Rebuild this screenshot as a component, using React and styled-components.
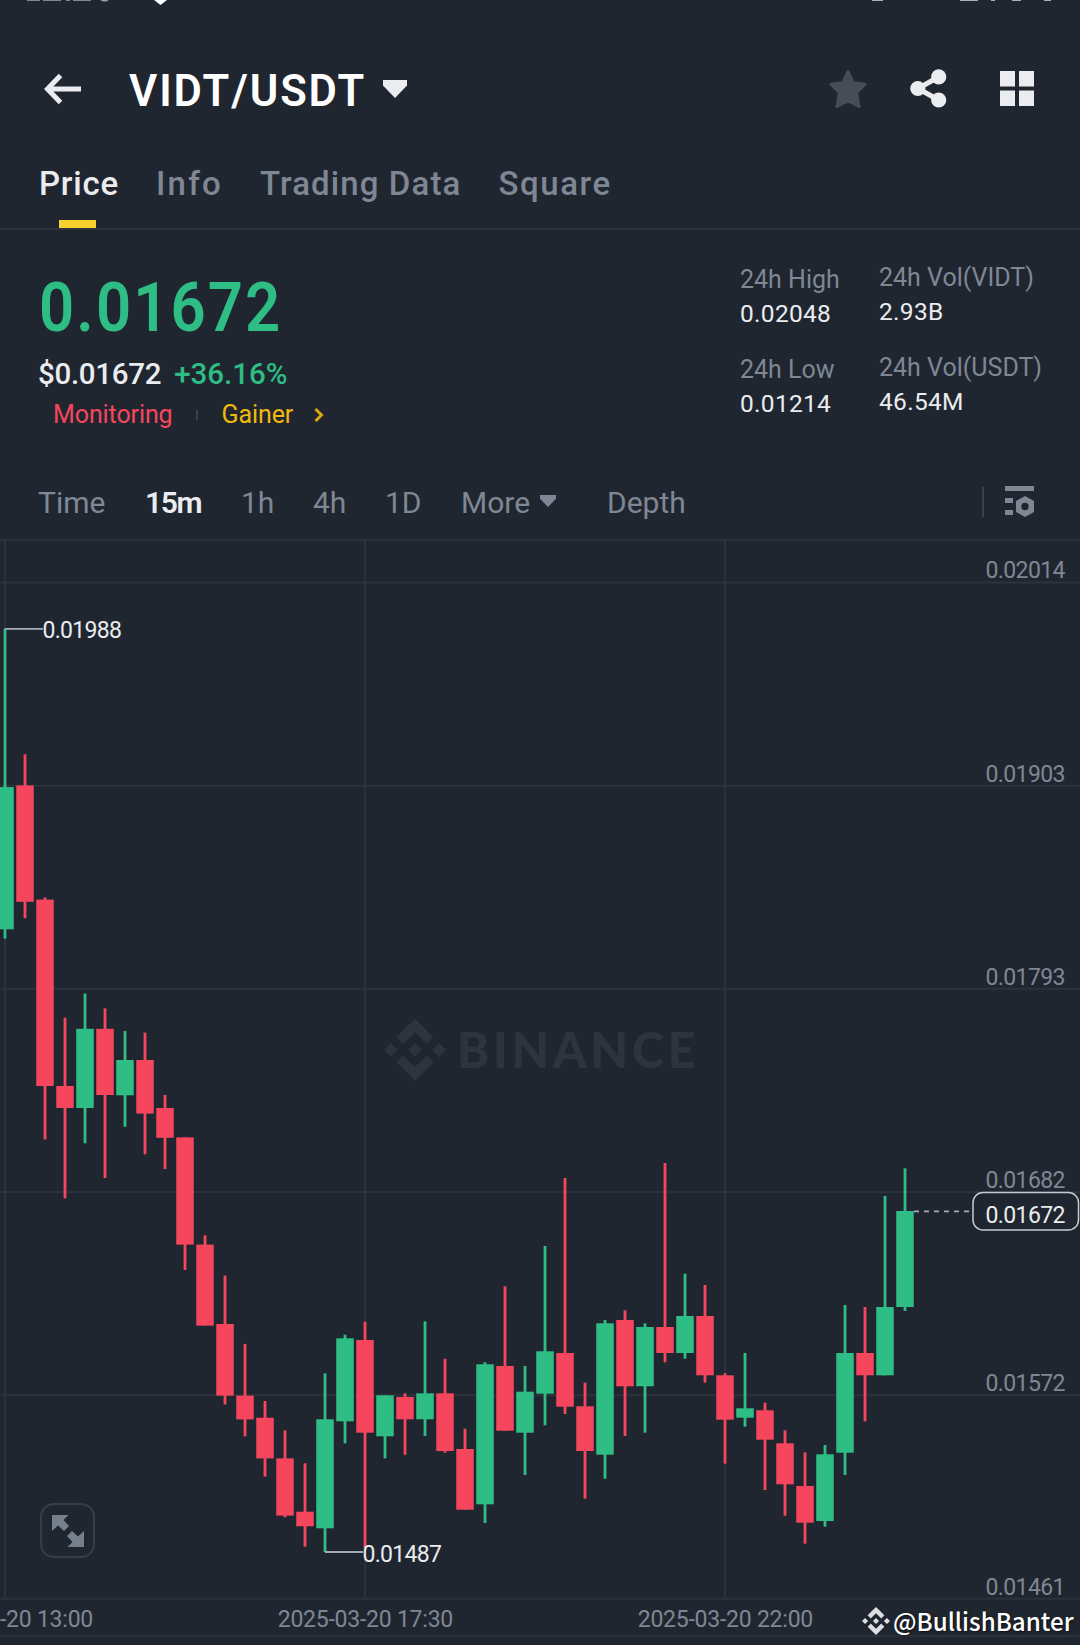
import React from 'react'
import styled, { createGlobalStyle } from 'styled-components'

const colors = {
  bg: '#202630',
  line: '#2c323c',
  text: '#eaecef',
  muted: '#7f8794',
  up: '#2ebd85',
  down: '#f6465d'
}

const GlobalStyle = createGlobalStyle`
  body {
    margin: 0;
    background: ${colors.bg};
    font-family: Roboto, "Liberation Sans", sans-serif;
    color: ${colors.text};
  }
`

const Screen = styled.main`
  display: flex;
  flex-direction: column;
  width: 1080px;
  height: 1645px;
  overflow: hidden;
  background: ${colors.bg};

  > * {
    flex: none;
  }
`

const StatusBar = styled.svg`
  display: block;
`

const Header = styled.header`
  display: flex;
  align-items: center;
  height: 138px;
  padding: 19px 46px 0 44px;
  box-sizing: border-box;
`

const Title = styled.h1`
  display: flex;
  align-items: center;
  gap: 17px;
  margin: 0 auto 0 47px;
  font-size: 43.5px;
  font-weight: 600;
  line-height: 52px;
  letter-spacing: 1.9px;
  color: #fff;
`

const Pair = styled.span`
  padding-top: 6px;
`

const Actions = styled.div`
  display: flex;
  align-items: center;
`

const ActionIcon = styled.svg`
  display: block;
  margin-left: ${p => p.$gap}px;
`

const Tabs = styled.nav`
  display: flex;
  gap: 37px;
  height: 82px;
  padding: 0 39px;
  border-bottom: 2px solid ${colors.line};
  box-sizing: border-box;
`

const Tab = styled.a`
  display: flex;
  flex-direction: column;
  align-items: center;
  justify-content: space-between;
  font-size: 33px;
  font-weight: 500;
  line-height: 72px;
  letter-spacing: ${p => p.$track}px;
  color: ${p => (p.$active ? colors.text : colors.muted)};
`

const Indicator = styled.span`
  width: 37px;
  height: 8px;
  margin-right: 4px;
  background: #f8d12f;
`

const Summary = styled.section`
  display: flex;
  justify-content: space-between;
  height: 223px;
  padding-left: 38px;
  box-sizing: border-box;
`

const PriceBlock = styled.div`
  display: flex;
  flex-direction: column;
  padding-top: 38px;
`

// narrower digits, set wider apart
const LastPrice = styled.div`
  margin-left: 1px;
  font-size: 68.5px;
  font-weight: 600;
  line-height: 80px;
  letter-spacing: 2.3px;
  color: ${colors.up};
  transform: scaleX(0.9);
  transform-origin: left;
`

const FiatRow = styled.div`
  display: flex;
  gap: 13px;
  margin-top: 8px;
  font-size: 29.5px;
  font-weight: 500;
  line-height: 36px;
  letter-spacing: -0.3px;
`

const Change = styled.span`
  letter-spacing: 0;
  color: ${colors.up};
`

const TagRow = styled.div`
  display: flex;
  align-items: center;
  padding-left: 15px;
  margin-top: 6px;
  font-size: 25px;
  line-height: 34px;
  letter-spacing: -0.1px;
`

const Tag = styled.span`
  color: ${p => p.$color};
`

const TagDivider = styled.i`
  width: 2px;
  height: 10px;
  margin: 0 24px 0 23px;
  background: #3a414c;
`

const Stats = styled.div`
  display: flex;
  width: 340px;
  padding-top: 33px;
`

const StatColumn = styled.dl`
  width: ${p => p.$width}px;
  margin: ${p => p.$top}px 0 0;
`

const StatLabel = styled.dt`
  font-size: 25px;
  line-height: 30px;
  white-space: nowrap;
  color: ${colors.muted};
`

const StatValue = styled.dd`
  margin: 4px 0 26px;
  font-size: 24.5px;
  line-height: 30px;
  letter-spacing: 0.3px;
`

const Toolbar = styled.div`
  display: flex;
  align-items: center;
  height: 86px;
  padding: 13px 45px 0 38px;
  box-sizing: border-box;
  font-size: 30px;
  color: ${colors.muted};
`

const Interval = styled.span`
  display: flex;
  align-items: center;
  gap: 10px;
  width: ${p => p.$width}px;
  font-weight: ${p => (p.$active ? 600 : 400)};
  letter-spacing: ${p => (p.$active ? -1.4 : 0)}px;
  color: ${p => (p.$active ? colors.text : 'inherit')};

  svg {
    margin-bottom: 4px;
  }
`

const ToolbarEnd = styled.div`
  display: flex;
  align-items: center;
  gap: 21px;
  margin-left: auto;
  padding-bottom: 2px;
`

const Separator = styled.i`
  width: 2px;
  height: 30px;
  background: #3a414c;
`

const ChartArea = styled.section`
  position: relative;
  height: 1106px;
`

const ChartSvg = styled.svg`
  display: block;
`

const ExpandButton = styled.button`
  position: absolute;
  left: 40px;
  top: 964px;
  display: flex;
  align-items: center;
  justify-content: center;
  width: 55px;
  height: 55px;
  padding: 0;
  border: 2px solid #363d47;
  border-radius: 14px;
  background: ${colors.bg};
`

const Signature = styled.div`
  position: absolute;
  left: 862px;
  top: 1065px;
  display: flex;
  align-items: center;
  gap: 3px;
  font-family: "Noto Sans CJK SC", "Noto Sans", sans-serif;
  font-size: 24.2px;
  font-weight: 500;
  line-height: 34px;
  white-space: nowrap;
  color: #fff;
  text-shadow: 1px 1px 2px rgba(0, 0, 0, 0.6);
`

// [direction, high, body top, body bottom, low], one candle every 20px
const candles = [
  ['u', 628.6, 787.1, 929.3, 938.6],
  ['d', 754.3, 785.4, 901.8, 918.2],
  ['d', 897.5, 899.6, 1086, 1139.5],
  ['d', 1017.7, 1086, 1108, 1198.4],
  ['u', 993.6, 1028.8, 1108, 1143.3],
  ['d', 1008.4, 1028.8, 1095, 1178],
  ['u', 1031, 1060, 1095.3, 1126.7],
  ['d', 1032.6, 1060, 1113.6, 1154.3],
  ['d', 1095, 1108, 1137.8, 1169],
  ['d', 1137.4, 1137.4, 1244.6, 1270],
  ['d', 1235.3, 1244.6, 1325.6, 1325.6],
  ['d', 1275.6, 1324, 1395.6, 1404.5],
  ['d', 1343.9, 1395.6, 1419.4, 1436.3],
  ['d', 1401, 1417.7, 1458.4, 1476.6],
  ['d', 1430.4, 1458.4, 1515.6, 1517.3],
  ['d', 1463.3, 1511.7, 1526.3, 1546.7],
  ['u', 1373.3, 1419.3, 1528.3, 1552],
  ['u', 1334.7, 1338.3, 1421.3, 1443.3],
  ['d', 1321.7, 1340, 1432.7, 1548],
  ['u', 1395.3, 1395.3, 1436.3, 1458.3],
  ['d', 1393.3, 1397, 1419.3, 1454.7],
  ['u', 1321.3, 1393.3, 1419.3, 1436],
  ['d', 1358.7, 1393.3, 1451, 1452.7],
  ['d', 1428.7, 1449, 1509.7, 1509.7],
  ['u', 1362.3, 1364.3, 1504.3, 1523],
  ['d', 1286.3, 1366, 1430.7, 1430.7],
  ['u', 1366, 1391.7, 1432.7, 1475],
  ['u', 1246, 1351.3, 1393.7, 1425.3],
  ['d', 1178, 1353, 1406.7, 1414],
  ['d', 1382.7, 1406.3, 1451, 1498.7],
  ['u', 1320, 1323.3, 1454.7, 1478.7],
  ['d', 1310.3, 1320, 1386.3, 1436],
  ['u', 1323.3, 1327, 1386.3, 1432.7],
  ['d', 1163, 1327, 1353, 1362.3],
  ['u', 1273.7, 1316, 1353, 1358.7],
  ['d', 1285, 1316, 1375.3, 1382.7],
  ['d', 1373.3, 1375.3, 1419.7, 1463.7],
  ['u', 1353, 1408.3, 1417.7, 1426.7],
  ['d', 1402.7, 1410.3, 1439.7, 1490],
  ['d', 1430.3, 1443.3, 1484.3, 1515.7],
  ['d', 1452.3, 1486, 1522.7, 1543.7],
  ['u', 1445, 1454.3, 1521, 1526.7],
  ['u', 1305, 1353, 1452.7, 1475],
  ['d', 1307, 1353, 1375.3, 1421.3],
  ['u', 1196, 1307, 1375.3, 1375.3],
  ['u', 1168.3, 1211, 1307, 1311]
]

const priceLevels = [
  [582.5, '0.02014'],
  [785.7, '0.01903'],
  [988.7, '0.01793'],
  [1192, '0.01682'],
  [1395.3, '0.01572'],
  [1598.7, '0.01461']
]

const timeMarks = [
  [5, '2025-03-20 13:00'],
  [365, '2025-03-20 17:30'],
  [725, '2025-03-20 22:00']
]

const TopStatus = () => (
  <StatusBar width="1080" height="10" viewBox="0 0 1080 10">
    <path d="M154 0h13l-6.500 5z" fill="#fff" />
    <path d="M27 .5h13M43 .5h18M66 .5h4M73 .5h18" stroke="#7f8791" />
    <path d="M100 0h9l-3 1.500h-3z" fill="#9aa0a8" />
    <path
      d="M872 .5h11M960 .5h18M991 .5h4M1012 .5h9M1044 .5h7"
      stroke="#aab0b6"
    />
  </StatusBar>
)

const BackIcon = () => (
  <svg width="38" height="32" viewBox="0 0 38 32" fill="none">
    <path
      d="M16.500 2.500 3.500 16l13 13.500M4 16h33"
      stroke={colors.text}
      strokeWidth="5"
    />
  </svg>
)

const Caret = ({ width, height, color }) => (
  <svg width={width} height={height} viewBox="0 0 24 18">
    <path d="M0 0h24v5.500L12 18 0 5.500z" fill={color} />
  </svg>
)

const BinanceMark = ({ size, x, y, color }) => (
  <svg x={x} y={y} width={size} height={size} viewBox="0 0 62 62">
    <path
      fill={color}
      d="M31 0l18.500 18.500-6.800 6.800L31 13.600 19.300 25.300l-6.800-6.800zM31 62l18.500-18.500-6.800-6.800L31 48.400 19.300 36.700l-6.800 6.800zM0 31l6.800-6.800 6.800 6.800-6.800 6.800zM48.400 31l6.800-6.800L62 31l-6.800 6.800zM24.200 31l6.800-6.800 6.800 6.800-6.800 6.800z"
    />
  </svg>
)

const Candle = ({ x, data: [dir, high, top, bottom, low] }) => (
  <g fill={dir === 'u' ? colors.up : colors.down}>
    <rect x={x - 1.4} y={high} width="2.8" height={low - high} />
    <rect x={x - 8.75} y={top} width="17.5" height={bottom - top} />
  </g>
)

const Chart = () => (
  <ChartSvg
    width="1080"
    height="1106"
    viewBox="0 539 1080 1106"
    fontFamily="Roboto, sans-serif"
    fontSize="23"
  >
    <g stroke={colors.line} strokeWidth="2">
      <path d="M0 540h1080M0 1636h1080" />
      {priceLevels.map(([y]) => (
        <path key={y} d={`M0 ${y}h1080`} />
      ))}
      {timeMarks.map(([x]) => (
        <path key={x} d={`M${x} 540V1599`} />
      ))}
    </g>

    <BinanceMark x={384} y={1018.7} size={62} color="#2e343f" />
    <text
      x="457"
      y="1067.500"
      textLength="238.500"
      fontFamily="Lato, sans-serif"
      fontSize="48.500"
      fontWeight="900"
      fill="#2e343f"
    >
      BINANCE
    </text>

    {candles.map((c, i) => (
      <Candle key={i} x={5 + i * 20} data={c} />
    ))}

    <g stroke="#a6abb5" strokeWidth="1.8">
      <path d="M5 628.800h38M325 1552h38" />
      <path d="M914 1211.300h57" strokeDasharray="5 5" />
    </g>
    <g fill={colors.text}>
      <text x="42.500" y="638" textLength="79.500">
        0.01988
      </text>
      <text x="362.500" y="1561.500" textLength="79.500">
        0.01487
      </text>
    </g>

    <g fill={colors.muted}>
      {priceLevels.map(([y, label]) => (
        <text key={label} x="985.500" y={y - 4.2} textLength="80">
          {label}
        </text>
      ))}
      {timeMarks.map(([x, label]) => (
        <text
          key={label}
          x={x + 0.5}
          y="1626.500"
          textLength="175.500"
          textAnchor="middle"
        >
          {label}
        </text>
      ))}
    </g>

    <rect
      x="973"
      y="1192.500"
      width="105.500"
      height="37.500"
      rx="10"
      fill={colors.bg}
      stroke="#c6cad2"
      strokeWidth="1.5"
    />
    <text x="985.500" y="1222.500" textLength="80" fill={colors.text}>
      0.01672
    </text>
  </ChartSvg>
)

const App = () => (
  <>
    <GlobalStyle />
    <Screen>
      <TopStatus />
      <Header>
        <BackIcon />
        <Title>
          <Pair>VIDT/USDT</Pair>
          <Caret width={24} height={18} color={colors.text} />
        </Title>
        <Actions>
          <ActionIcon width="38" height="40" viewBox="0 0 38 40" $gap={0}>
            <path
              d="M19 2.500l5.200 11.200L36 15.200l-8.500 8.400L30 37.500l-11-5.500-11 5.500 2.500-13.900L2 15.200l11.800-1.500z"
              fill="#474d57"
              stroke="#474d57"
              strokeWidth="3"
              strokeLinejoin="round"
            />
          </ActionIcon>
          <ActionIcon width="37" height="39" viewBox="0 0 37 39" $gap={43}>
            <path
              d="M28.500 8 8 19.500 28.500 31"
              fill="none"
              stroke={colors.text}
              strokeWidth="5"
            />
            <g fill={colors.text}>
              <circle cx="28.700" cy="7.800" r="7.600" />
              <circle cx="7.800" cy="19.500" r="7.600" />
              <circle cx="28.700" cy="31" r="7.600" />
            </g>
          </ActionIcon>
          <ActionIcon width="34" height="35" viewBox="0 0 34 35" $gap={53}>
            <path
              d="M0 0h15v15.500H0zM19 0h15v15.500H19zM0 19.500h15V35H0zM19 19.500h15V35H19z"
              fill={colors.text}
            />
          </ActionIcon>
        </Actions>
      </Header>

      <Tabs>
        <Tab $active $track={0.8}>
          Price
          <Indicator />
        </Tab>
        <Tab $track={2.2}>Info</Tab>
        <Tab $track={1.1}>Trading Data</Tab>
        <Tab $track={1.6}>Square</Tab>
      </Tabs>

      <Summary>
        <PriceBlock>
          <LastPrice>0.01672</LastPrice>
          <FiatRow>
            <span>$0.01672</span>
            <Change>+36.16%</Change>
          </FiatRow>
          <TagRow>
            <Tag $color={colors.down}>Monitoring</Tag>
            <TagDivider />
            <Tag $color="#f0b90b">Gainer</Tag>
            <ActionIcon width="10" height="14" viewBox="0 0 10 14" $gap={21}>
              <path
                d="M1.500 1l6 6-6 6"
                fill="none"
                stroke="#d8a815"
                strokeWidth="3"
              />
            </ActionIcon>
          </TagRow>
        </PriceBlock>
        <Stats>
          <StatColumn $width={139} $top={2}>
            <StatLabel>24h High</StatLabel>
            <StatValue>0.02048</StatValue>
            <StatLabel>24h Low</StatLabel>
            <StatValue>0.01214</StatValue>
          </StatColumn>
          <StatColumn $width={170} $top={0}>
            <StatLabel>24h Vol(VIDT)</StatLabel>
            <StatValue>2.93B</StatValue>
            <StatLabel>24h Vol(USDT)</StatLabel>
            <StatValue>46.54M</StatValue>
          </StatColumn>
        </Stats>
      </Summary>

      <Toolbar>
        <Interval $width={107}>Time</Interval>
        <Interval $width={96} $active>
          15m
        </Interval>
        <Interval $width={72}>1h</Interval>
        <Interval $width={72}>4h</Interval>
        <Interval $width={76}>1D</Interval>
        <Interval $width={146}>
          More
          <Caret width={16} height={12} color={colors.muted} />
        </Interval>
        <Interval $width={90}>Depth</Interval>
        <ToolbarEnd>
          <Separator />
          <svg width="30" height="31" viewBox="0 0 30 31">
            <path
              fill={colors.muted}
              fillRule="evenodd"
              d="M0 0h29v5H0zM0 12h8v5H0zM0 24h8v5H0zM20 10l9 5v11l-9 5-9-5V15zM20 16.800a3.700 3.700 0 1 0 0 7.400 3.700 3.700 0 0 0 0-7.400z"
            />
          </svg>
        </ToolbarEnd>
      </Toolbar>

      <ChartArea>
        <Chart />
        <ExpandButton aria-label="Expand chart">
          <svg width="32" height="32" viewBox="0 0 32 32">
            <path
              fill="#76808d"
              d="M0 0h16.500l-5 5 5.500 6-5 5-6-5.500-6 5.500zM32 32H15.500l5-5-5.500-6 5-5 6 5.500 6-5.500z"
            />
          </svg>
        </ExpandButton>
        <Signature>
          <BinanceMark size={28} color="#dcdee2" />
          @BullishBanter
        </Signature>
      </ChartArea>
    </Screen>
  </>
)

export default App
